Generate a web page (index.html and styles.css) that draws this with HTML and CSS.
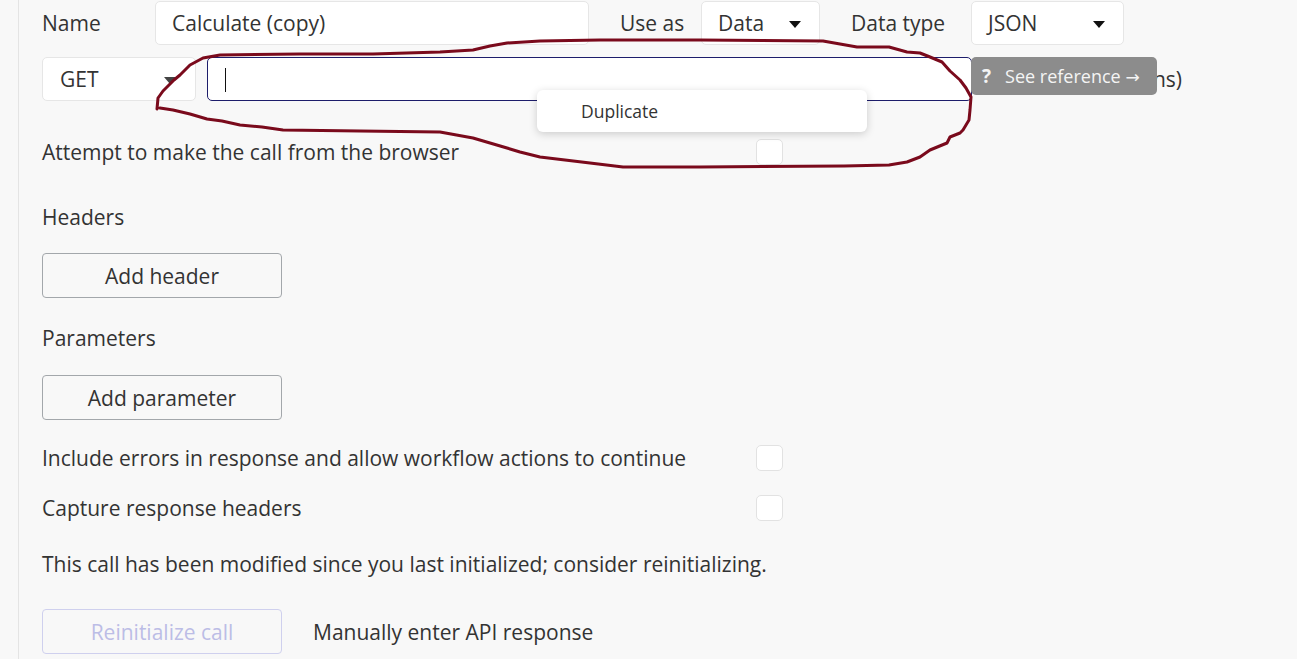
FILE: index.html
```html
<!DOCTYPE html>
<html lang="en">
<head>
    <meta charset="UTF-8">
    <meta name="viewport" content="width=device-width, initial-scale=1.0">
    <title>API call</title>
    <link rel="stylesheet" href="styles.css">
</head>
<body>
    <div class="page">
        <div class="row top">
            <span class="label name">Name</span>
            <div class="input name-input">Calculate (copy)</div>
            <span class="label use">Use as</span>
            <div class="select data">Data<span class="arrow"></span></div>
            <span class="label type">Data type</span>
            <div class="select json">JSON<span class="arrow"></span></div>
        </div>

        <div class="row url">
            <div class="select get">GET<span class="arrow grey"></span></div>
            <div class="input url-input"><span class="caret"></span></div>
            <span class="hint">(for API connections)</span>
        </div>

        <div class="check-row browser">
            <span class="check-label">Attempt to make the call from the browser</span>
            <span class="box"></span>
        </div>

        <div class="section headers">Headers</div>
        <button class="btn">Add header</button>

        <div class="section params">Parameters</div>
        <button class="btn">Add parameter</button>

        <div class="check-row errors">
            <span class="check-label">Include errors in response and allow workflow actions to continue</span>
            <span class="box"></span>
        </div>
        <div class="check-row capture">
            <span class="check-label">Capture response headers</span>
            <span class="box"></span>
        </div>

        <div class="note">This call has been modified since you last initialized; consider reinitializing.</div>

        <div class="row actions">
            <button class="btn disabled">Reinitialize call</button>
            <span class="manual">Manually enter API response</span>
        </div>

        <div class="menu">
            <div class="menu-item">Duplicate</div>
        </div>

        <div class="tip"><b>?</b>See reference <span class="tip-arrow">→</span></div>

        <svg class="scribble" width="1297" height="659" viewBox="0 0 1297 659">
            <polyline points="157,109 158,98 163,91 167,87 174,80 180,75 190,65 203,58 220,55 300,54 373,54 440,52 473,50 490,46 507,43 540,41 600,40 700,40 823,41 840,44 857,47 889,47 907,52 920,53 930,57 942,62 950,71 960,80 966,88 971,97 970,110 969,120 963,130 960,133 950,137 947,143 930,150 920,157 907,162 889,165 844,166 700,167 623,167 590,163 540,157 520,152 507,148 490,143 473,138 440,132 360,131 283,130 262,127 240,125 222,121 207,119 190,114 173,110 160,108" />
        </svg>
    </div>
</body>
</html>
```

FILE: styles.css
```css
*{
    margin: 0;
    padding: 0;
    box-sizing: border-box;
}
body{
    background: #f8f8f8;
    font-family: "Open Sans", "Liberation Sans", sans-serif;
    font-size: 21px;
    color: #333;
    overflow: hidden;
}
.page{
    position: relative;
    width: 1297px;
    height: 659px;
    margin-left: 18px;
    border-left: 1px solid #e4e4e4;
    padding-left: 23px;
    display: flex;
    flex-direction: column;
    align-items: flex-start;
}
.row{
    display: flex;
    align-items: center;
}
.top{
    margin-top: 1px;
}
.label{
    line-height: 44px;
}
.name{
    width: 113px;
}
.use{
    margin-left: 31px;
    width: 81px;
}
.type{
    margin-left: 31px;
    width: 120px;
}
.input,
.select{
    position: relative;
    height: 44px;
    line-height: 42px;
    background: #fff;
    border: 1px solid #e6e6e6;
    border-radius: 5px;
    padding-left: 16px;
}
.name-input{
    width: 434px;
}
.data{
    width: 119px;
}
.json{
    width: 153px;
}
.arrow{
    position: absolute;
    right: 18px;
    top: 19px;
    width: 0;
    height: 0;
    border-left: 6px solid transparent;
    border-right: 6px solid transparent;
    border-top: 7px solid #111;
}
.arrow.grey{
    border-top-color: #444;
    right: 19px;
}
.url{
    margin-top: 12px;
}
.get{
    width: 154px;
    padding-left: 17px;
}
.url-input{
    margin-left: 11px;
    width: 765px;
    border-color: #1d1d6b;
}
.caret{
    position: absolute;
    left: 17px;
    top: 10px;
    width: 1px;
    height: 24px;
    background: #111;
}
.hint{
    margin-left: 8px;
    white-space: nowrap;
}
.check-row{
    display: flex;
    align-items: center;
    height: 26px;
}
.check-label{
    width: 714px;
    line-height: 26px;
}
.box{
    width: 27px;
    height: 26px;
    background: #fff;
    border: 1px solid #e2e2e2;
    border-radius: 5px;
}
.browser{
    margin-top: 38px;
}
.section{
    line-height: 28px;
}
.headers{
    margin-top: 38px;
}
.params{
    margin-top: 26px;
}
.btn{
    width: 240px;
    height: 45px;
    margin-top: 22px;
    background: #f8f8f8;
    border: 1px solid #a3a7ab;
    border-radius: 4px;
    font-family: inherit;
    font-size: 21px;
    color: #333;
}
.params + .btn{
    margin-top: 23px;
}
.errors{
    margin-top: 25px;
}
.capture{
    margin-top: 24px;
}
.note{
    margin-top: 29px;
    line-height: 28px;
}
.actions{
    margin-top: 9px;
}
.btn.disabled{
    margin-top: 22px;
    border-color: #cfd0ee;
    color: #bcbde6;
}
.manual{
    margin-left: 31px;
    margin-top: 22px;
}
.menu{
    position: absolute;
    left: 518px;
    top: 90px;
    width: 330px;
    height: 42px;
    background: #fff;
    border-radius: 6px;
    box-shadow: 0 2px 8px rgba(0,0,0,0.18);
}
.menu-item{
    padding-left: 44px;
    line-height: 42px;
    font-size: 17.5px;
    color: #333;
}
.tip{
    position: absolute;
    left: 952px;
    top: 57px;
    width: 186px;
    height: 38px;
    background: #8c8c8c;
    border-radius: 5px;
    color: #f4f4f4;
    font-size: 18px;
    line-height: 38px;
    padding-left: 11px;
    white-space: nowrap;
}
.tip b{
    font-size: 19px;
    margin-right: 14px;
}
.tip-arrow{
    font-family: "DejaVu Sans", sans-serif;
    font-size: 17px;
}
.scribble{
    position: absolute;
    left: -19px;
    top: 0;
    pointer-events: none;
}
.scribble polyline{
    fill: none;
    stroke: #7a0a1c;
    stroke-width: 3;
    stroke-linejoin: round;
    stroke-linecap: round;
}
```
